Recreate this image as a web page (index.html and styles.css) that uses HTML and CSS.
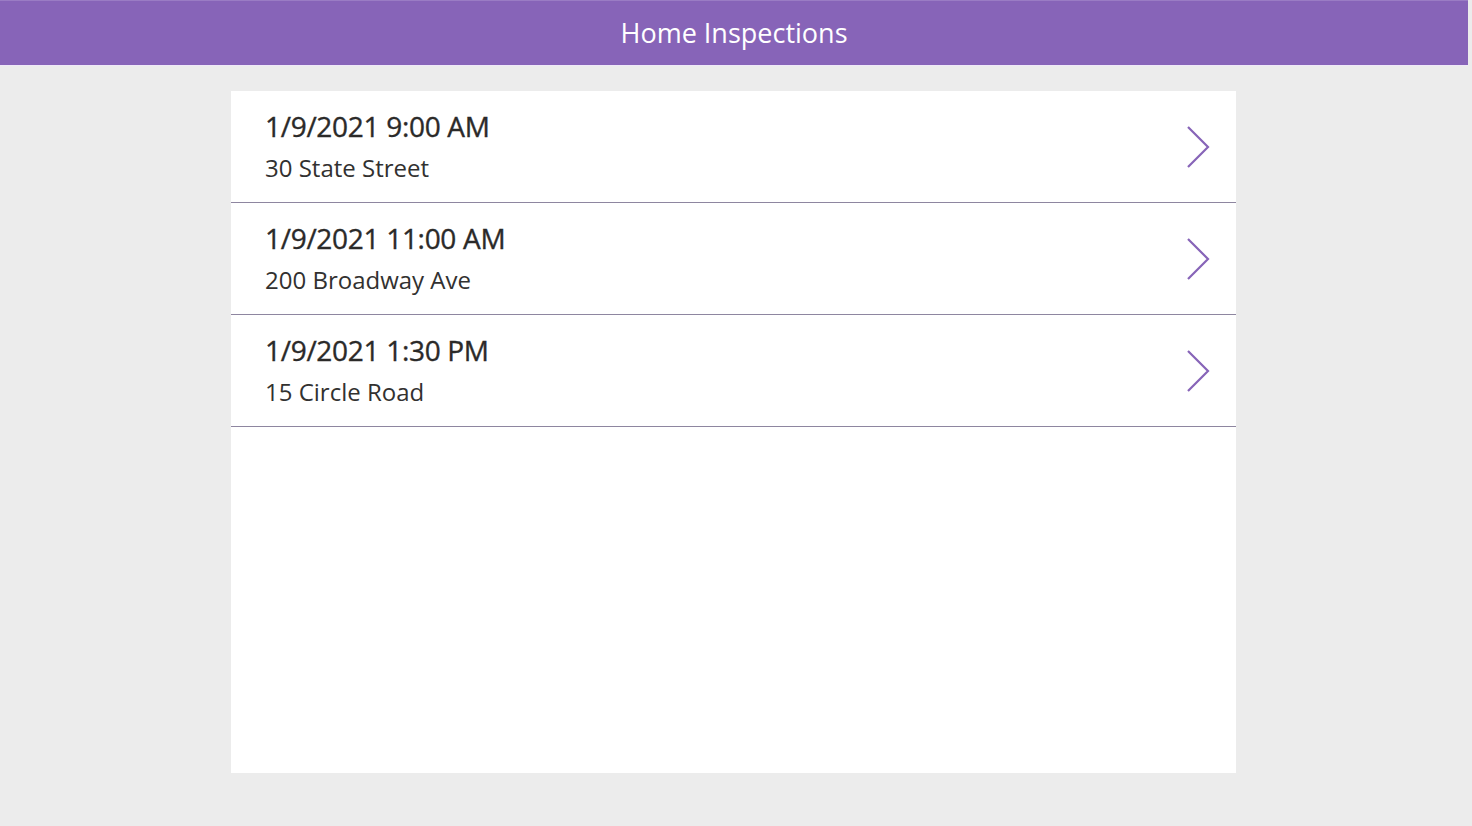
FILE: index.html
```html
<!DOCTYPE html>
<html lang="en">
<head>
<meta charset="utf-8">
<title>Home Inspections</title>
<link rel="stylesheet" href="styles.css">
</head>
<body>
<div class="screen">
  <header class="header">Home Inspections</header>
  <main class="content">
    <section class="card">
      <div class="row">
        <div class="text">
          <div class="title">1/9/2021 9:00 AM</div>
          <div class="sub">30 State Street</div>
        </div>
        <svg class="chev" viewBox="0 0 24 42" width="24" height="42"><path d="M2 1 L22 21 L2 41" fill="none" stroke="#8764b8" stroke-width="2.2"/></svg>
      </div>
      <div class="row">
        <div class="text">
          <div class="title">1/9/2021 11:00 AM</div>
          <div class="sub">200 Broadway Ave</div>
        </div>
        <svg class="chev" viewBox="0 0 24 42" width="24" height="42"><path d="M2 1 L22 21 L2 41" fill="none" stroke="#8764b8" stroke-width="2.2"/></svg>
      </div>
      <div class="row">
        <div class="text">
          <div class="title">1/9/2021 1:30 PM</div>
          <div class="sub">15 Circle Road</div>
        </div>
        <svg class="chev" viewBox="0 0 24 42" width="24" height="42"><path d="M2 1 L22 21 L2 41" fill="none" stroke="#8764b8" stroke-width="2.2"/></svg>
      </div>
    </section>
  </main>
</div>
</body>
</html>
```
FILE: styles.css
```css
html, body {
  margin: 0;
  padding: 0;
  height: 100%;
  background: #ececec;
  font-family: "Open Sans", "Noto Sans", "Liberation Sans", sans-serif;
  overflow: hidden;
}
.screen {
  width: 1468px;
  height: 826px;
  display: flex;
  flex-direction: column;
}
.header {
  border-top: 1px solid #9a7cc4;
  border-bottom: 1px solid #efe8f8;
  background: #8764b8;
  color: #ffffff;
  font-size: 27px;
  display: flex;
  align-items: center;
  justify-content: center;
  box-sizing: border-box;
  height: 66px;
  padding-bottom: 1px;
}
.content {
  padding-top: 25px;
  padding-left: 231px;
}
.card {
  width: 1005px;
  height: 682px;
  background: #ffffff;
}
.row {
  height: 111px;
  border-bottom: 1px solid #8e86a0;
  display: flex;
  align-items: center;
  justify-content: space-between;
  padding: 0 26px 0 34px;
}
.text {
  display: flex;
  flex-direction: column;
  padding-bottom: 2px;
}
.title {
  font-size: 28px;
  color: #2b2a29;
  line-height: 36px;
  letter-spacing: -0.3px;
  -webkit-text-stroke: 0.35px #2b2a29;
}
.sub {
  font-size: 24px;
  color: #323130;
  line-height: 30px;
  margin-top: 9px;
}
.chev {
  display: block;
}
```
